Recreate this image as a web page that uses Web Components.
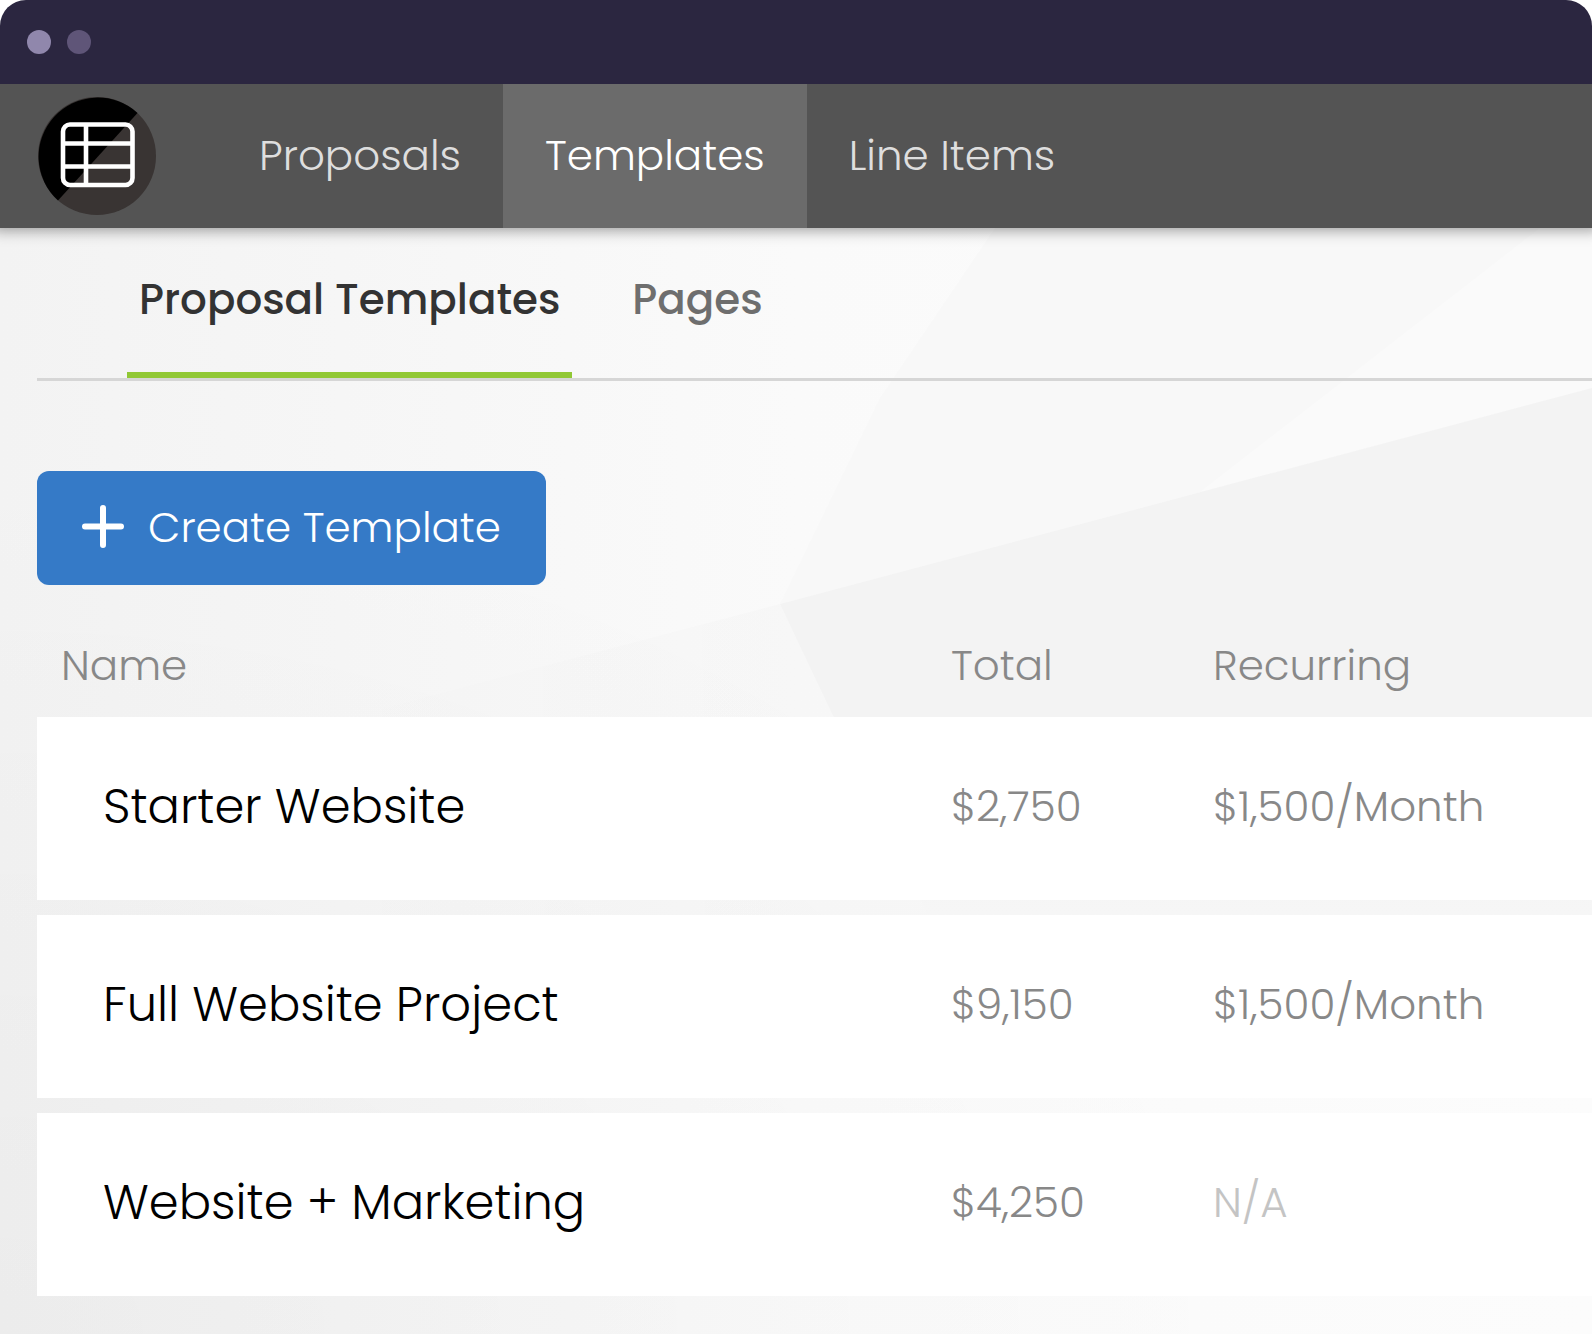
<!DOCTYPE html>
<html lang="en">
<head>
<meta charset="utf-8">
<meta name="viewport" content="width=device-width, initial-scale=1">
<title>Proposal Templates</title>
<style>
  body {
    margin: 0;
    min-height: 100vh;
    display: flex;
    flex-direction: column;
    background: #fff;
    font-family: Poppins, Inter, sans-serif;
    font-size: 42px;
    font-weight: 300;
    line-height: 60px;
  }
  template-page {
    flex: 1;
  }
</style>
</head>
<body>
  <window-bar></window-bar>
  <app-nav>
    <nav-link href="#proposals">Proposals</nav-link>
    <nav-link href="#templates" active>Templates</nav-link>
    <nav-link href="#items">Line Items</nav-link>
  </app-nav>
  <template-page>
    <tab-bar slot="tabs">
      <tab-link href="#proposal-templates" active>Proposal Templates</tab-link>
      <tab-link href="#pages">Pages</tab-link>
    </tab-bar>
    <create-button>Create Template</create-button>
    <template-table></template-table>
  </template-page>

<script>
class WindowBar extends HTMLElement {
  constructor() {
    super();
    this.attachShadow({ mode: 'open' });
    this.shadowRoot.innerHTML = `
      <style>
        :host {
          display: flex;
          align-items: center;
          gap: 16px;
          height: 84px;
          padding: 0 27px;
          box-sizing: border-box;
          background: #2b2640;
          border-radius: 26px 26px 0 0;
        }
        span {
          width: 24px;
          height: 24px;
          border-radius: 50%;
          background: #5f5578;
        }
        span:first-of-type {
          background: #9087ac;
        }
      </style>
      <span></span>
      <span></span>
    `;
  }
}

class AppNav extends HTMLElement {
  constructor() {
    super();
    this.attachShadow({ mode: 'open' });
    this.shadowRoot.innerHTML = `
      <style>
        :host {
          display: flex;
          align-items: center;
          gap: 61px;
          height: 144px;
          padding: 0 38px;
          box-sizing: border-box;
          background: #545454;
          box-shadow: 0 -6px 14px 8px rgba(0, 0, 0, 0.4);
          clip-path: inset(0 0 -30px 0);
          position: relative;
          z-index: 1;
        }
        svg {
          display: block;
          width: 118px;
          height: 118px;
        }
        nav {
          display: flex;
          align-self: stretch;
        }
      </style>
      <svg viewBox="0 0 118 118" role="img" aria-label="Home">
        <circle cx="59" cy="59" r="59" fill="#393433"/>
        <path d="M99.500 16A59 59 0 1 0 20 103.500Z" fill="#000"/>
        <g fill="none" stroke="#fff" stroke-width="4.600">
          <rect x="25" y="27.500" width="69.500" height="60.500" rx="7"/>
          <path d="M25 46.500H94.500M25 69.500H94.500M48 27.500V88"/>
        </g>
      </svg>
      <nav><slot></slot></nav>
    `;
  }
}

class NavLink extends HTMLElement {
  constructor() {
    super();
    this.attachShadow({ mode: 'open' });
    this.shadowRoot.innerHTML = `
      <style>
        :host {
          display: flex;
        }
        a {
          display: flex;
          align-items: center;
          padding: 0 42px;
          color: #dedede;
          text-decoration: none;
        }
        :host([active]) a {
          color: #fff;
          background: #6b6b6b;
        }
      </style>
      <a href="${this.getAttribute('href')}"><slot></slot></a>
    `;
  }
}

class TemplatePage extends HTMLElement {
  constructor() {
    super();
    this.attachShadow({ mode: 'open' });
    this.shadowRoot.innerHTML = `
      <style>
        :host {
          display: grid;
          background: #f7f7f7;
        }
        svg, main {
          grid-area: 1 / 1;
        }
        svg {
          width: 100%;
          height: 100%;
          min-height: 0;
        }
        main {
          display: flex;
          flex-direction: column;
          align-items: flex-start;
          padding-left: 37px;
        }
        ::slotted(*) {
          align-self: stretch;
        }
        ::slotted(create-button) {
          align-self: flex-start;
          margin: 90px 0 36px;
        }
      </style>
      <svg viewBox="0 0 1592 1106" preserveAspectRatio="none" aria-hidden="true">
        <defs>
          <linearGradient id="base" x1="0" y1="0" x2="1" y2="0">
            <stop offset="0" stop-color="#f3f3f3"/>
            <stop offset="0.500" stop-color="#fafafa"/>
            <stop offset="1" stop-color="#fcfcfc"/>
          </linearGradient>
          <radialGradient id="corner" cx="0" cy="1" r="0.800">
            <stop offset="0" stop-color="#000" stop-opacity="0.030"/>
            <stop offset="1" stop-color="#000" stop-opacity="0"/>
          </radialGradient>
          <linearGradient id="ridge" gradientUnits="userSpaceOnUse" x1="300" y1="0" x2="780" y2="0">
            <stop offset="0" stop-color="#000" stop-opacity="0"/>
            <stop offset="1" stop-color="#000" stop-opacity="0.012"/>
          </linearGradient>
          <linearGradient id="right" x1="0" y1="0" x2="0" y2="1">
            <stop offset="0" stop-color="#f3f3f3"/>
            <stop offset="0.600" stop-color="#f3f3f3"/>
            <stop offset="1" stop-color="#fbfbfb"/>
          </linearGradient>
        </defs>
        <path d="M0 0H1592V1106H0Z" fill="url(#base)"/>
        <path d="M0 0H1592V1106H0Z" fill="url(#corner)"/>
        <path d="M995 0H1592V160L780 376L880 170Z" fill="#f8f8f8"/>
        <path d="M1540 0H1592V160L1200 264Z" fill="#fafafa"/>
        <path d="M300 502L780 376L960 740H300Z" fill="url(#ridge)"/>
        <path d="M1592 160L780 376L1010 860H1592Z" fill="url(#right)"/>
      </svg>
      <main><slot name="tabs"></slot><slot></slot></main>
    `;
  }
}

class TabBar extends HTMLElement {
  constructor() {
    super();
    this.attachShadow({ mode: 'open' });
    this.shadowRoot.innerHTML = `
      <style>
        :host {
          display: block;
          border-bottom: 3px solid #d6d6d6;
        }
        nav {
          display: flex;
          gap: 48px;
          height: 150px;
          padding-left: 90px;
        }
      </style>
      <nav aria-label="Template sections"><slot></slot></nav>
    `;
  }
}

class TabLink extends HTMLElement {
  constructor() {
    super();
    this.attachShadow({ mode: 'open' });
    this.shadowRoot.innerHTML = `
      <style>
        :host {
          display: flex;
        }
        a {
          padding: 42px 12px 0;
          border-bottom: 6px solid transparent;
          color: #6e6e6e;
          font-weight: 500;
          text-decoration: none;
        }
        :host([active]) a {
          color: #333;
          border-color: #91c835;
        }
      </style>
      <a href="${this.getAttribute('href')}"><slot></slot></a>
    `;
  }
}

class CreateButton extends HTMLElement {
  constructor() {
    super();
    this.attachShadow({ mode: 'open' });
    this.shadowRoot.innerHTML = `
      <style>
        :host {
          display: block;
        }
        button {
          display: flex;
          align-items: center;
          gap: 24px;
          height: 114px;
          padding: 0 45px;
          border: 0;
          border-radius: 12px;
          background: #357ac7;
          color: #fff;
          font: inherit;
          cursor: pointer;
        }
        svg {
          width: 42px;
          height: 42px;
        }
      </style>
      <button type="button">
        <svg viewBox="0 0 42 42" fill="none" stroke="#fff" stroke-width="6" stroke-linecap="round" overflow="visible" aria-hidden="true">
          <path d="M21 1V38M3 19.500H39"/>
        </svg>
        <slot></slot>
      </button>
    `;
  }
}

class TemplateTable extends HTMLElement {
  constructor() {
    super();
    this.attachShadow({ mode: 'open' });
    this.templates = [
      { name: 'Starter Website', total: '$2,750', recurring: '$1,500/Month' },
      { name: 'Full Website Project', total: '$9,150', recurring: '$1,500/Month' },
      { name: 'Website + Marketing', total: '$4,250', recurring: null },
    ];
    this.render();
  }

  render() {
    const rows = this.templates.map(t => `
      <tr>
        <td class="name">${t.name}</td>
        <td>${t.total}</td>
        <td class="${t.recurring ? '' : 'empty'}">${t.recurring || 'N/A'}</td>
      </tr>
    `).join('');

    this.shadowRoot.innerHTML = `
      <style>
        :host {
          display: block;
          padding-bottom: 23px;
        }
        table {
          width: 100%;
          table-layout: fixed;
          border-collapse: separate;
          border-spacing: 0 15px;
          color: #888;
        }
        th, td {
          box-sizing: border-box;
          padding: 0 0 4px;
          text-align: left;
          font-weight: inherit;
        }
        th {
          height: 66px;
          padding-bottom: 6px;
        }
        th:first-child {
          padding-left: 24px;
        }
        th:nth-child(2) {
          width: 262px;
        }
        th:nth-child(3) {
          width: 379px;
        }
        td {
          height: 183px;
          background: #fff;
        }
        td.name {
          padding-left: 66px;
          color: #000;
          font-size: 48px;
        }
        td.empty {
          color: #c4c4c4;
        }
      </style>
      <table>
        <thead>
          <tr><th scope="col">Name</th><th scope="col">Total</th><th scope="col">Recurring</th></tr>
        </thead>
        <tbody>${rows}</tbody>
      </table>
    `;
  }
}

customElements.define('window-bar', WindowBar);
customElements.define('app-nav', AppNav);
customElements.define('nav-link', NavLink);
customElements.define('template-page', TemplatePage);
customElements.define('tab-bar', TabBar);
customElements.define('tab-link', TabLink);
customElements.define('create-button', CreateButton);
customElements.define('template-table', TemplateTable);
</script>
</body>
</html>
